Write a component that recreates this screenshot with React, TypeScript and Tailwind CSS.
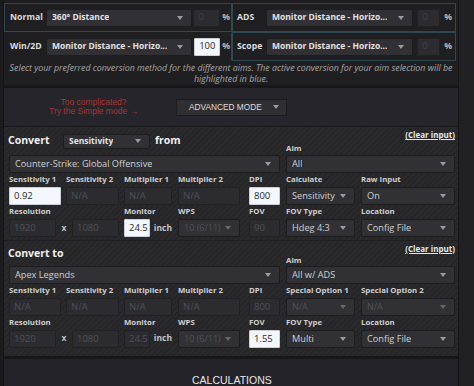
import React from 'react'

const hatch =
  'bg-[repeating-linear-gradient(135deg,#262629_0px,#262629_2px,#2a2a2d_2px,#2a2a2d_4px)]'

const Caret = ({ dim }: { dim?: boolean }) => (
  <span
    className={`shrink-0 w-0 h-0 border-x-[3px] border-x-transparent border-t-[4px] ${
      dim ? 'border-t-[#66666c]' : 'border-t-[#9a9aa0]'
    }`}
  />
)

type Tone = 'bold' | 'reg' | 'dim'

const Sel = ({ text, className = '', tone = 'reg' }: { text: string; className?: string; tone?: Tone }) => {
  const t =
    tone === 'bold'
      ? 'font-bold text-[8.5px] text-[#e2e2e2]'
      : tone === 'dim'
        ? 'text-[9px] text-[#515157]'
        : 'text-[9.2px] text-[#d0d0d0]'
  return (
    <div
      className={`flex items-center justify-between bg-[#303035] border border-[#1d1d20] rounded-[2px] pl-[5px] pr-[8px] ${className}`}
    >
      <span className={`truncate whitespace-nowrap ${t}`}>{text}</span>
      <Caret dim={tone === 'dim'} />
    </div>
  )
}

const Inp = ({ v, white, className = '' }: { v: string; white?: boolean; className?: string }) => (
  <div
    className={`flex items-center h-[18px] pl-[4px] text-[9.5px] border rounded-[1px] ${
      white ? 'bg-[#f4f7fe] border-[#c9d0dc] text-[#2a2a2a]' : 'bg-[#2c2c30] border-[#212124] text-[#4f4f55]'
    } ${className}`}
  >
    {v}
  </div>
)

const Field = ({ label, className = '', children }: { label: string; className?: string; children: React.ReactNode }) => (
  <div className={`flex flex-col ${className}`}>
    <div className="h-[13px] leading-[13px] text-[7.8px] font-bold text-[#cfcfcf] whitespace-nowrap">{label}</div>
    <div className="mt-[1px]">{children}</div>
  </div>
)

const Resolution = () => (
  <Field label="Resolution" className="w-[110px]">
    <div className="flex items-center">
      <Inp v="1920" className="w-[47px]" />
      <span className="flex-1 text-center text-[8.5px] font-bold text-[#bdbdbd]">x</span>
      <Inp v="1080" className="w-[47px]" />
    </div>
  </Field>
)

const Monitor = ({ white }: { white?: boolean }) => (
  <Field label="Monitor" className="ml-[5px] w-[48px]">
    <div className="flex items-center">
      <Inp v="24.5" white={white} className="w-[27px]" />
      <span className="ml-[4px] text-[8.5px] font-bold text-[#c4c4c4]">inch</span>
    </div>
  </Field>
)

const TopCell = ({
  label,
  value,
  input,
  white,
  right,
  border,
}: {
  label: string
  value: string
  input: string
  white?: boolean
  right?: boolean
  border: string
}) => (
  <div
    className={`flex items-center h-full border ${border} ${
      right ? 'w-[224px] pl-[4px] pr-[3px]' : 'w-[228px] pl-[5px] pr-[1px]'
    }`}
  >
    <span className={`font-bold text-[8.7px] text-[#dcdcdc] ${right ? 'w-[29px]' : 'w-[36px]'}`}>{label}</span>
    <Sel text={value} tone="bold" className="flex-1 h-[18px]" />
    <Inp
      v={input}
      white={white}
      className={right ? 'ml-[4px] w-[23px] !text-[#3f3f44]' : white ? 'ml-[2px] w-[26px]' : 'ml-[1px] w-[27px] !text-[#3f3f44]'}
    />
    <span className={`font-bold text-[8.7px] text-[#b8b8b8] ${right ? 'ml-[4px]' : 'ml-[2px]'}`}>%</span>
  </div>
)

const ClearInput = () => (
  <span className="self-end font-bold text-[8px] leading-[11px] text-[#e6e6e6] underline">(Clear input)</span>
)

export default function App() {
  return (
    <div className="w-[474px] h-[386px] overflow-hidden bg-[#1c1c1f] flex font-['Open_Sans',sans-serif]">
      <div className="w-[4px] bg-[#1b1b1e] border-r border-[#141416]" />
      <div className="w-[454px] flex flex-col">
        {/* conversion methods */}
        <div className="h-[88px] bg-[#1f1f22] pt-[3px] flex flex-col">
          <div className="flex h-[29px]">
            <TopCell label="Normal" value="360° Distance" input="0" border="border-[#2b4853]" />
            <TopCell label="ADS" value="Monitor Distance - Horizo..." input="0" right border="border-[#2b4853]" />
          </div>
          <div className="flex h-[29px]">
            <TopCell label="Win/2D" value="Monitor Distance - Horizo..." input="100" white border="border-transparent border-r-[#2b4853]" />
            <TopCell label="Scope" value="Monitor Distance - Horizo..." input="0" right border="border-[#2b4853]" />
          </div>
          <p className="mt-[2px] text-center italic text-[8.8px] leading-[11px] text-[#a6a6a6] whitespace-nowrap">
            Select your preferred conversion method for the different aims. The active conversion for your aim selection will be
            <br />
            highlighted in blue.
          </p>
        </div>

        {/* mode band */}
        <div className="h-[43px] border-t-[3px] border-b border-t-[#17171a] border-b-[#18181b] bg-[#25252b] flex items-center font-['Liberation_Sans',sans-serif]">
          <div className="w-[172px] pl-[7px] text-center text-[8.5px] leading-[9px] text-[#a83532]">
            Too complicated?
            <br />
            Try the Simple mode →
          </div>
          <div className="w-[111px] h-[17px] bg-[#2e2e33] border border-[#1c1c20] flex items-center justify-between pl-[12px] pr-[7px]">
            <span className="text-[8.3px] text-[#dedede]">ADVANCED MODE</span>
            <Caret />
          </div>
        </div>

        {/* convert from */}
        <div className={`h-[116px] ${hatch} pl-[5px] pr-[3px] flex flex-col`}>
          <div className="flex h-[28px]">
            <div className="w-[271px] flex items-center">
              <span className="w-[55px] -ml-[1px] font-bold text-[10.5px] text-[#f0f0f0]">Convert</span>
              <Sel text="Sensitivity" tone="bold" className="w-[87px] h-[15px]" />
              <span className="ml-[5px] font-bold text-[10.5px] text-[#f0f0f0]">from</span>
            </div>
            <div className="ml-[6px] w-[169px] flex flex-col justify-between pt-[2px]">
              <ClearInput />
              <span className="h-[13px] leading-[13px] text-[7.8px] font-bold text-[#cfcfcf]">Aim</span>
            </div>
          </div>
          <div className="flex">
            <Sel text="Counter-Strike: Global Offensive" className="w-[271px] h-[18px]" />
            <Sel text="All" className="ml-[6px] w-[169px] h-[18px]" />
          </div>
          <div className="flex">
            <Field label="Sensitivity 1" className="w-[52px]">
              <Inp v="0.92" white />
            </Field>
            <Field label="Sensitivity 2" className="ml-[5px] w-[53px]">
              <Inp v="N/A" />
            </Field>
            <Field label="Multiplier 1" className="ml-[5px] w-[48px]">
              <Inp v="N/A" />
            </Field>
            <Field label="Multiplier 2" className="ml-[6px] w-[62px]">
              <Inp v="N/A" />
            </Field>
            <Field label="DPI" className="ml-[9px] w-[31px]">
              <Inp v="800" white />
            </Field>
            <Field label="Calculate" className="ml-[6px] w-[69px]">
              <Sel text="Sensitivity" className="h-[18px]" />
            </Field>
            <Field label="Raw Input" className="ml-[6px] w-[94px]">
              <Sel text="On" className="h-[18px]" />
            </Field>
          </div>
          <div className="flex">
            <Resolution />
            <Monitor white />
            <Field label="WPS" className="ml-[6px] w-[62px]">
              <Sel text="10 (6/11)" tone="dim" className="h-[18px]" />
            </Field>
            <Field label="FOV" className="ml-[9px] w-[31px]">
              <Inp v="90" />
            </Field>
            <Field label="FOV Type" className="ml-[6px] w-[69px]">
              <Sel text="Hdeg 4:3" className="h-[18px]" />
            </Field>
            <Field label="Location" className="ml-[6px] w-[94px]">
              <Sel text="Config File" className="h-[18px]" />
            </Field>
          </div>
        </div>

        {/* convert to */}
        <div className={`h-[120px] border-t border-[#202023] ${hatch} pl-[5px] pr-[3px] flex flex-col`}>
          <div className="flex h-[25px]">
            <div className="w-[271px] flex items-center pt-[1px]">
              <span className="-ml-[1px] font-bold text-[10.5px] text-[#f0f0f0]">Convert to</span>
            </div>
            <div className="ml-[6px] w-[169px] flex flex-col justify-between pt-[2px]">
              <ClearInput />
              <span className="h-[12px] leading-[12px] text-[7.8px] font-bold text-[#cfcfcf]">Aim</span>
            </div>
          </div>
          <div className="flex">
            <Sel text="Apex Legends" className="w-[271px] h-[18px]" />
            <Sel text="All w/ ADS" className="ml-[6px] w-[169px] h-[18px]" />
          </div>
          <div className="flex">
            <Field label="Sensitivity 1" className="w-[52px]">
              <Inp v="N/A" />
            </Field>
            <Field label="Sensitivity 2" className="ml-[5px] w-[53px]">
              <Inp v="N/A" />
            </Field>
            <Field label="Multiplier 1" className="ml-[5px] w-[48px]">
              <Inp v="N/A" />
            </Field>
            <Field label="Multiplier 2" className="ml-[6px] w-[62px]">
              <Inp v="N/A" />
            </Field>
            <Field label="DPI" className="ml-[9px] w-[31px]">
              <Inp v="800" />
            </Field>
            <Field label="Special Option 1" className="ml-[6px] w-[69px]">
              <Sel text="N/A" tone="dim" className="h-[18px]" />
            </Field>
            <Field label="Special Option 2" className="ml-[6px] w-[94px]">
              <Sel text="N/A" tone="dim" className="h-[18px]" />
            </Field>
          </div>
          <div className="flex">
            <Resolution />
            <Monitor />
            <Field label="WPS" className="ml-[6px] w-[62px]">
              <Sel text="10 (6/11)" tone="dim" className="h-[18px]" />
            </Field>
            <Field label="FOV" className="ml-[9px] w-[31px]">
              <Inp v="1.55" white />
            </Field>
            <Field label="FOV Type" className="ml-[6px] w-[69px]">
              <Sel text="Multi" className="h-[18px]" />
            </Field>
            <Field label="Location" className="ml-[6px] w-[94px]">
              <Sel text="Config File" className="h-[18px]" />
            </Field>
          </div>
        </div>

        {/* calculations */}
        <div className="flex-1 border-t-[3px] border-[#18181b] bg-[#222228] pl-[188px] pt-[15px] font-['Liberation_Sans',sans-serif] text-[10.5px] leading-[12px] text-[#e8e8e8] whitespace-nowrap">
          CALCULATIONS
        </div>
      </div>
      <div className="flex-1 bg-[#202025] border-l border-[#151517]" />
    </div>
  )
}
